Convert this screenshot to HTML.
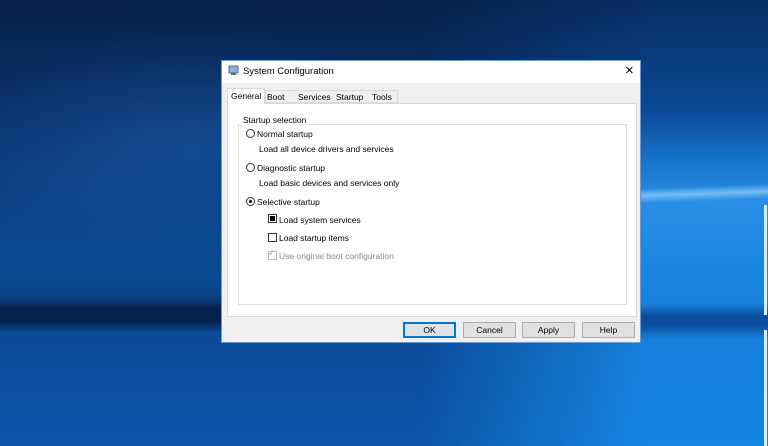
<!DOCTYPE html><html><head><style>
body{margin:0;width:768px;height:446px;overflow:hidden;position:relative;font-family:"Liberation Sans",sans-serif;font-size:8.5px;color:#000;
background:linear-gradient(180deg,#06204a 0%,#082d62 20%,#0b3d80 40%,#0d4a95 60%,#0a3f82 68%,#0b4c98 76%,#0c55aa 100%);}
.l{position:absolute}
.dlg{left:221px;top:60px;width:420px;height:283px;background:#f0f0f0;border:1px solid #6a9ad6;box-sizing:border-box}
.t{position:absolute;white-space:nowrap}
.btn{position:absolute;top:261px;width:53px;height:16px;background:#e1e1e1;border:1px solid #adadad;box-sizing:border-box;text-align:center;line-height:14px}
.rb{position:absolute;width:9px;height:9px;border:1px solid #333;border-radius:50%;background:#fff;box-sizing:border-box}
.cb{position:absolute;width:9px;height:9px;border:1px solid #333;background:#fff;box-sizing:border-box}
</style></head><body>
<div class="l" style="left:0;top:0;width:768px;height:446px;background:radial-gradient(ellipse 350px 160px at 25% 32%,rgba(40,110,200,.35),transparent 70%)"></div>
<div class="l" style="left:0;top:298px;width:768px;height:34px;background:linear-gradient(180deg,transparent,rgba(2,22,55,.75) 30%,rgba(2,22,55,.75) 70%,transparent)"></div>
<div class="l" style="left:420px;top:0;width:348px;height:446px;-webkit-mask-image:linear-gradient(90deg,transparent,#000 65%);mask-image:linear-gradient(90deg,transparent,#000 65%);
background:linear-gradient(180deg,#082d62 0%,#0a4a96 25%,#1670c8 35%,#2a8ee6 45%,#1a86e0 60%,#1a82dc 68%,#0a4c9c 71%,#0c4f9e 73%,#1680dc 76%,#1585e2 100%)"></div>
<div class="l" style="left:560px;top:180px;width:208px;height:30px;background:linear-gradient(178deg,transparent 30%,rgba(150,210,255,.7) 50%,transparent 70%)"></div>
<div class="l" style="left:764px;top:205px;width:3px;height:110px;background:#d8ecff"></div>
<div class="l" style="left:764px;top:330px;width:3px;height:116px;background:#d8ecff"></div>
<div class="l dlg">
 <div class="l" style="left:0;top:0;width:418px;height:22px;background:#fff"></div>
 <svg class="l" style="left:6px;top:4px" width="11" height="11"><rect x="1" y="1" width="9" height="7" fill="#8ab2e0" stroke="#456" stroke-width=".8"/><rect x="3" y="8" width="5" height="2" fill="#667"/></svg>
 <div class="t" style="left:21px;top:5px;font-size:9.5px">System Configuration</div>
 <div class="t" style="left:403px;top:1px;font-size:15px">×</div>
 <div class="l" style="left:5px;top:42px;width:410px;height:214px;background:#fff;border:1px solid #d9d9d9;box-sizing:border-box"></div>
 <div class="l" style="left:5px;top:27px;width:38px;height:16px;background:#fff;border:1px solid #d9d9d9;border-bottom:none;box-sizing:border-box"></div>
 <div class="t" style="left:9px;top:30px">General</div>
 <div class="l" style="left:43px;top:29px;width:133px;height:13px;border:1px solid #d9d9d9;box-sizing:border-box;background:#f0f0f0"></div>
 <div class="t" style="left:45px;top:31px">Boot</div>
 <div class="t" style="left:76px;top:31px">Services</div>
 <div class="t" style="left:114px;top:31px">Startup</div>
 <div class="t" style="left:150px;top:31px">Tools</div>
 <div class="l" style="left:16px;top:63px;width:389px;height:181px;border:1px solid #dcdcdc;box-sizing:border-box"></div>
 <div class="t" style="left:19px;top:54px;background:#fff;padding:0 2px">Startup selection</div>
 <div class="rb" style="left:24px;top:68px"></div><div class="t" style="left:35px;top:68px">Normal startup</div>
 <div class="t" style="left:37px;top:83px">Load all device drivers and services</div>
 <div class="rb" style="left:24px;top:102px"></div><div class="t" style="left:35px;top:102px">Diagnostic startup</div>
 <div class="t" style="left:37px;top:117px">Load basic devices and services only</div>
 <div class="rb" style="left:24px;top:136px"></div><div class="l" style="left:27px;top:139px;width:3px;height:3px;border-radius:50%;background:#000"></div>
 <div class="t" style="left:35px;top:136px">Selective startup</div>
 <div class="cb" style="left:46px;top:153px"></div><div class="l" style="left:48px;top:155px;width:5px;height:5px;background:#000"></div>
 <div class="t" style="left:57px;top:154px">Load system services</div>
 <div class="cb" style="left:46px;top:172px"></div><div class="t" style="left:57px;top:172px">Load startup items</div>
 <div class="cb" style="left:46px;top:190px;border-color:#bbb"></div><div class="t" style="left:46px;top:187px;color:#aaa;font-size:9px">✓</div>
 <div class="t" style="left:57px;top:190px;color:#888">Use original boot configuration</div>
 <div class="btn" style="left:181px;border:1px solid #0078d7;box-shadow:inset 0 0 0 1px #0078d7">OK</div>
 <div class="btn" style="left:241px">Cancel</div>
 <div class="btn" style="left:300px">Apply</div>
 <div class="btn" style="left:360px">Help</div>
</div>
</body></html>
